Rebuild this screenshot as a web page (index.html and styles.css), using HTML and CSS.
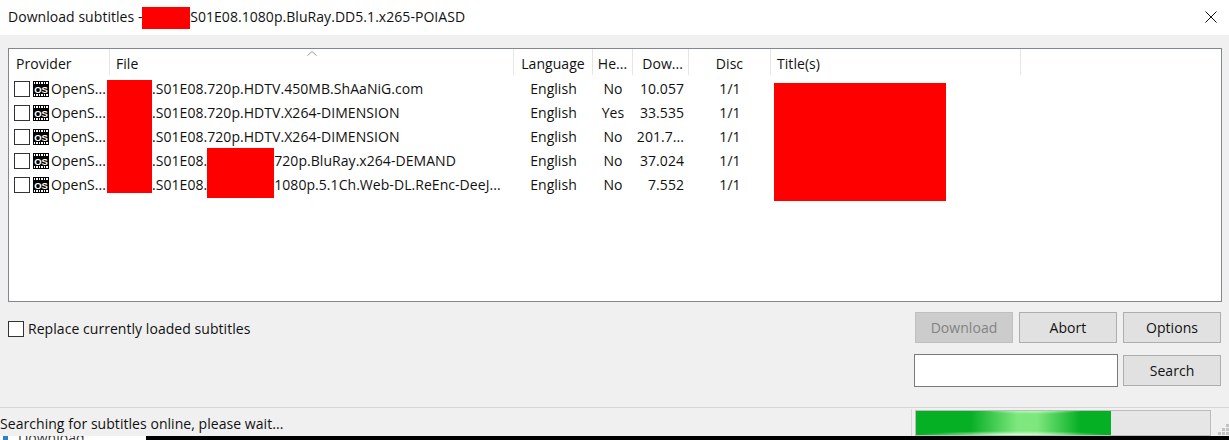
FILE: index.html
```html
<!DOCTYPE html>
<html lang="en">
<head>
    <meta charset="UTF-8">
    <meta name="viewport" content="width=device-width, initial-scale=1.0">
    <title>Download subtitles</title>
    <link rel="stylesheet" href="styles.css">
</head>
<body>
    <div class="window">
        <div class="titlebar">
            <div class="title">Download subtitles - <span class="title-gap"></span>S01E08.1080p.BluRay.DD5.1.x265-POIASD</div>
            <svg class="close" width="12" height="12" viewBox="0 0 12 12"><path d="M0.5 0.5L11.5 11.5M11.5 0.5L0.5 11.5" stroke="#111" stroke-width="1" fill="none"/></svg>
            <div class="redact redact-title"></div>
        </div>

        <div class="content">
            <div class="list">
                <div class="row head">
                    <div class="cell c-provider">Provider</div>
                    <div class="cell c-file">File</div>
                    <div class="cell c-lang">Language</div>
                    <div class="cell c-hearing">He...</div>
                    <div class="cell c-down">Dow...</div>
                    <div class="cell c-disc">Disc</div>
                    <div class="cell c-titles">Title(s)</div>
                    <div class="cell c-rest"></div>
                </div>
                <svg class="sort" width="10" height="5" viewBox="0 0 10 5"><path d="M0.5 4.5L5 0.5L9.5 4.5" stroke="#999" fill="none"/></svg>

                <div class="row item">
                    <div class="cell c-provider"><span class="check"></span><svg class="os" width="16" height="16" viewBox="0 0 16 16"><use href="#os-icon"/></svg><span class="prov">OpenS...</span></div>
                    <div class="cell c-file">.S01E08.720p.HDTV.450MB.ShAaNiG.com</div>
                    <div class="cell c-lang">English</div>
                    <div class="cell c-hearing">No</div>
                    <div class="cell c-down">10.057</div>
                    <div class="cell c-disc">1/1</div>
                </div>
                <div class="row item">
                    <div class="cell c-provider"><span class="check"></span><svg class="os" width="16" height="16" viewBox="0 0 16 16"><use href="#os-icon"/></svg><span class="prov">OpenS...</span></div>
                    <div class="cell c-file">.S01E08.720p.HDTV.X264-DIMENSION</div>
                    <div class="cell c-lang">English</div>
                    <div class="cell c-hearing">Yes</div>
                    <div class="cell c-down">33.535</div>
                    <div class="cell c-disc">1/1</div>
                </div>
                <div class="row item">
                    <div class="cell c-provider"><span class="check"></span><svg class="os" width="16" height="16" viewBox="0 0 16 16"><use href="#os-icon"/></svg><span class="prov">OpenS...</span></div>
                    <div class="cell c-file">.S01E08.720p.HDTV.X264-DIMENSION</div>
                    <div class="cell c-lang">English</div>
                    <div class="cell c-hearing">No</div>
                    <div class="cell c-down">201.7...</div>
                    <div class="cell c-disc">1/1</div>
                </div>
                <div class="row item">
                    <div class="cell c-provider"><span class="check"></span><svg class="os" width="16" height="16" viewBox="0 0 16 16"><use href="#os-icon"/></svg><span class="prov">OpenS...</span></div>
                    <div class="cell c-file">.S01E08.<span class="file-gap"></span>720p.BluRay.x264-DEMAND</div>
                    <div class="cell c-lang">English</div>
                    <div class="cell c-hearing">No</div>
                    <div class="cell c-down">37.024</div>
                    <div class="cell c-disc">1/1</div>
                </div>
                <div class="row item">
                    <div class="cell c-provider"><span class="check"></span><svg class="os" width="16" height="16" viewBox="0 0 16 16"><use href="#os-icon"/></svg><span class="prov">OpenS...</span></div>
                    <div class="cell c-file">.S01E08.<span class="file-gap"></span>1080p.5.1Ch.Web-DL.ReEnc-DeeJ...</div>
                    <div class="cell c-lang">English</div>
                    <div class="cell c-hearing">No</div>
                    <div class="cell c-down">7.552</div>
                    <div class="cell c-disc">1/1</div>
                </div>

                <!-- blacked out (well, redded out) parts of the screenshot -->
                <div class="redact redact-file"></div>
                <div class="redact redact-file2"></div>
                <div class="redact redact-titles"></div>
            </div>

            <div class="controls">
                <label class="replace"><span class="check"></span>Replace currently loaded subtitles</label>
                <div class="actions">
                    <div class="btn-row">
                        <button class="btn" disabled>Download</button>
                        <button class="btn">Abort</button>
                        <button class="btn">Options</button>
                    </div>
                    <div class="btn-row search-row">
                        <input class="search-box" type="text">
                        <button class="btn">Search</button>
                    </div>
                </div>
            </div>
        </div>

        <div class="statusbar">
            <div class="status-text">Searching for subtitles online, please wait...</div>
            <div class="progress"><div class="progress-fill"></div></div>
            <svg class="grip" width="11" height="11" viewBox="0 0 11 11"><path d="M8 0h3v3H8zM4 4h3v3H4zM8 4h3v3H8zM0 8h3v3H0zM4 8h3v3H4zM8 8h3v3H8z" fill="#c4c4c4"/></svg>
        </div>

        <div class="taskstrip">
            <div class="task-item"><span class="task-icon"></span>Download</div>
        </div>
    </div>

    <svg class="defs" width="0" height="0">
        <defs>
            <g id="os-icon">
                <rect width="16" height="16" fill="#000"/>
                <path d="M1 1h1v2H1zM3 1h2v2H3zM6 1h1v2H6zM8 1h2v2H8zM11 1h1v2h-1zM13 1h2v2h-2zM1 13h1v2H1zM3 13h2v2H3zM6 13h1v2H6zM8 13h2v2H8zM11 13h1v2h-1zM13 13h2v2h-2z" fill="#fff"/>
                <text x="8" y="11.5" text-anchor="middle" font-family="Liberation Sans, sans-serif" font-size="9.5" font-weight="bold" letter-spacing="0" fill="#fff">OS</text>
            </g>
        </defs>
    </svg>
</body>
</html>
```
FILE: styles.css
```css
* {
    box-sizing: border-box;
}
body {
    margin: 0;
    background-color: #000;
    color: #111;
    font-family: "Open Sans", "Noto Sans", sans-serif;
    font-size: 14px;
    letter-spacing: 0.05px;
    overflow: hidden;
}
.defs {
    position: absolute;
}
.window {
    width: 1229px;
    height: 440px;
    display: flex;
    flex-direction: column;
    position: relative;
}

/* title bar */
.titlebar {
    height: 35px;
    background-color: #fff;
    display: flex;
    align-items: center;
    justify-content: space-between;
    padding: 0 12px 2px 8px;
    position: relative;
}
.title-gap {
    display: inline-block;
    width: 44px;
}
.redact {
    position: absolute;
    background-color: #f00;
}
.redact-title {
    left: 142px;
    top: 7px;
    width: 48px;
    height: 22px;
}

/* main area */
.content {
    height: 372px;
    background-color: #f0f0f0;
    padding: 13px 7px 0 8px;
}
.list {
    height: 254px;
    background-color: #fff;
    border: 1px solid #828790;
    position: relative;
}
.row {
    display: flex;
}
.head {
    height: 26px;
    margin-bottom: 2px;
}
.head .cell {
    border-right: 1px solid #e5e5e5;
    line-height: 30px;
}
.item {
    height: 24px;
    line-height: 24px;
}
.cell {
    white-space: nowrap;
    overflow: hidden;
    flex: none;
}
.c-provider {
    width: 101px;
    padding-left: 7px;
}
.c-file {
    width: 404px;
    padding-left: 6px;
}
.c-lang {
    width: 79px;
    text-align: center;
}
.c-hearing {
    width: 40px;
    text-align: center;
}
.c-down {
    width: 56px;
    text-align: right;
    padding-right: 5px;
}
.c-disc {
    width: 82px;
    text-align: center;
}
.c-titles {
    width: 250px;
    padding-left: 6px;
}
.head .c-rest {
    flex: 1;
    border-right: none;
}
.item .c-provider {
    display: flex;
    align-items: center;
    padding-left: 5px;
}
.item .c-file {
    padding-left: 42px;
}
.file-gap {
    display: inline-block;
    width: 67px;
}
.check {
    width: 16px;
    height: 16px;
    background-color: #fff;
    border: 1px solid #333;
    flex: none;
}
.os {
    margin-left: 3px;
    flex: none;
}
.prov {
    margin-left: 2px;
}
.sort {
    position: absolute;
    left: 298px;
    top: 2px;
}
.redact-file {
    left: 98px;
    top: 31px;
    width: 45px;
    height: 113px;
}
.redact-file2 {
    left: 198px;
    top: 99px;
    width: 67px;
    height: 50px;
}
.redact-titles {
    left: 765px;
    top: 34px;
    width: 172px;
    height: 118px;
}

/* controls under the list */
.controls {
    display: flex;
    justify-content: space-between;
    padding-top: 10px;
}
.replace {
    display: flex;
    align-items: center;
    gap: 4px;
    height: 16px;
    margin-top: 9px;
    line-height: 16px;
}
.actions {
    display: flex;
    flex-direction: column;
    gap: 11px;
    width: 308px;
    margin-right: 1px;
}
.btn-row {
    display: flex;
    justify-content: flex-end;
    gap: 6px;
    align-items: center;
}
.btn {
    width: 98px;
    height: 31px;
    background-color: #e1e1e1;
    border: 1px solid #adadad;
    color: #111;
    font: inherit;
    letter-spacing: inherit;
    padding: 0;
}
.btn:disabled {
    background-color: #ccc;
    border-color: #bfbfbf;
    color: #838383;
}
.search-box {
    width: 204px;
    height: 33px;
    background-color: #fff;
    border: 1px solid #7a7a7a;
    margin-right: -1px;
}

/* status bar */
.statusbar {
    height: 29px;
    background-color: #f0f0f0;
    border-top: 1px solid #d7d7d7;
    display: flex;
    align-items: flex-start;
    position: relative;
}
.status-text {
    width: 912px;
    height: 27px;
    line-height: 29px;
    margin-top: 1px;
    border-right: 1px solid #d7d7d7;
    flex: none;
}
.progress {
    width: 296px;
    height: 26px;
    margin: 2px 0 0 3px;
    background-color: #e6e6e6;
    border: 1px solid #bcbcbc;
}
.progress-fill {
    width: 195px;
    height: 100%;
    background:
        radial-gradient(ellipse 50px 3px at 60% 0, rgba(190,255,190,0.85), transparent),
        radial-gradient(ellipse 95px 4px at 50% 100%, rgba(225,255,225,0.95), transparent),
        linear-gradient(to right, #06b025 0, #06b025 28%, #7ee87e 52%, #7ee87e 62%, #06b025 84%, #06b025 100%);
}
.grip {
    position: absolute;
    right: 0;
    bottom: 1px;
}

/* bit of the taskbar showing behind the window */
.taskstrip {
    height: 4px;
    background-color: #000;
    overflow: hidden;
}
.task-item {
    width: 146px;
    height: 4px;
    background-color: #fff;
    padding-left: 18px;
    line-height: 4px;
    color: #333;
    position: relative;
}
.task-icon {
    position: absolute;
    left: 3px;
    top: 0;
    width: 5px;
    height: 4px;
    background-color: #2d7fc9;
}
```
